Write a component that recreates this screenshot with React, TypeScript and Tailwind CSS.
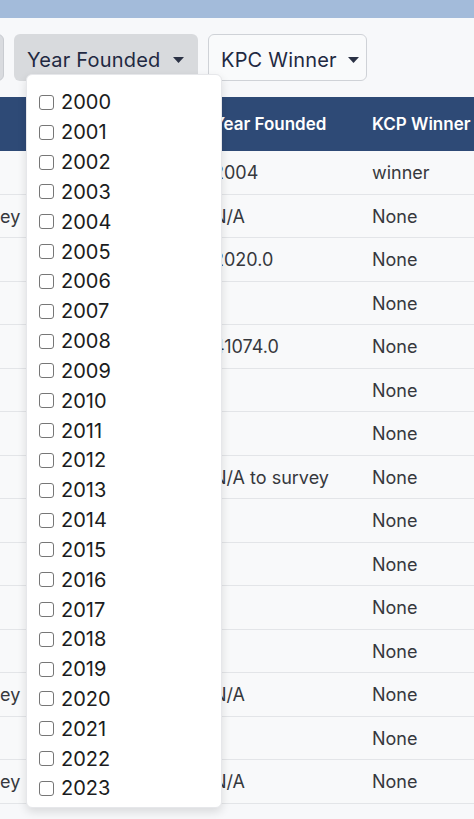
const years = Array.from({ length: 24 }, (_, i) => String(2000 + i));

// rows of the table under the dropdown: [first col, year founded, kcp winner]
const rows: [string, string, string][] = [
  ['', '2004', 'winner'],
  ['ey', 'N/A', 'None'],
  ['', '2020.0', 'None'],
  ['', '', 'None'],
  ['', '41074.0', 'None'],
  ['', '', 'None'],
  ['', '', 'None'],
  ['', 'N/A to survey', 'None'],
  ['', '', 'None'],
  ['', '', 'None'],
  ['', '', 'None'],
  ['', '', 'None'],
  ['ey', 'N/A', 'None'],
  ['', '', 'None'],
  ['ey', 'N/A', 'None'],
];

function Caret() {
  return (
    <svg width="11" height="6" viewBox="0 0 11 6" className="shrink-0">
      <path d="M0 0h11L5.5 6z" fill="#2b3245" />
    </svg>
  );
}

export default function App() {
  return (
    <div
      className="relative w-[474px] h-[819px] overflow-hidden bg-[#f7f8fa] text-[#2f3036]"
      style={{ fontFamily: 'Inter, "Open Sans", sans-serif' }}
    >
      <div className="h-[18px] bg-[#a3bbda]" />

      {/* filter buttons */}
      <div className="flex gap-[10px] mt-[16px] h-[47px]">
        <button className="-ml-[140px] w-[144px] shrink-0 rounded-md border border-[#c9ccd1] bg-[#d9dbdf]" />
        <button className="flex w-[184px] shrink-0 items-center gap-[13px] rounded-md bg-[#d8dadd] pl-[13px] pt-[5px] text-[20px] tracking-[0.2px] text-[#1f2942]">
          Year Founded
          <Caret />
        </button>
        <button className="flex w-[159px] shrink-0 items-center gap-[11px] rounded-md border border-[#cfd2d7] bg-[#f9fafb] pl-[12px] pt-[5px] text-[20px] tracking-[0.2px] text-[#1f2942]">
          KPC Winner
          <Caret />
        </button>
      </div>

      {/* table */}
      <div className="mt-[16px]">
        <div className="flex h-[54px] items-center bg-[#2e4a76] pt-[2px] text-[17px] font-semibold text-white">
          <div className="w-[213px] shrink-0" />
          <div className="w-[159px] shrink-0 whitespace-nowrap">Year Founded</div>
          <div className="whitespace-nowrap">KCP Winner</div>
        </div>
        {rows.map((r, i) => (
          <div
            key={i}
            className="flex h-[43.5px] items-center border-b border-[#e3e5e8] bg-[#f8f9fa] pt-[1px] text-[18px] text-[#36383d]"
          >
            <div className="w-[213px] shrink-0 whitespace-nowrap">{r[0]}</div>
            <div className="w-[159px] shrink-0 whitespace-nowrap">{r[1]}</div>
            <div className="whitespace-nowrap">{r[2]}</div>
          </div>
        ))}
      </div>

      {/* dropdown menu */}
      <div className="absolute left-[26px] top-[74px] w-[196px] h-[734px] rounded-md border border-[#e6e7ea] bg-white pt-[12px] shadow-[0_4px_10px_rgba(0,0,0,0.12)]">
        {years.map(y => (
          <label key={y} className="flex h-[29.83px] items-center pl-[12px] pt-[1px] text-[20px] text-[#1b1c20]">
            <span className="mr-[7px] h-[15px] w-[15px] rounded-[3px] border border-[#767676] bg-white" />
            {y}
          </label>
        ))}
      </div>
    </div>
  );
}
